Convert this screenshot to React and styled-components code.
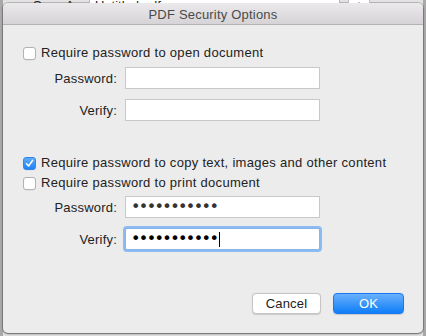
import React from 'react'
import styled, { createGlobalStyle } from 'styled-components'

const GlobalStyle = createGlobalStyle`
    html, body {
        margin: 0;
        padding: 0;
        background: #c4c4c4;
    }
    body {
        font-family: "Liberation Sans", Arial, sans-serif;
        -webkit-font-smoothing: antialiased;
    }
`

function Checkbox({ checked })
{
    return (
        <Box checked={checked}>
            {checked && (
                <svg width='9' height='9' viewBox='0 0 9 9'>
                    <path d='M1.5 4.8 L3.6 7 L7.6 1.4' fill='none' stroke='#fff' strokeWidth='1.6' strokeLinecap='round' strokeLinejoin='round' />
                </svg>
            )}
        </Box>
    )
}

function Field({ label, dots, focused, dark })
{
    return (
        <FieldRow>
            <FieldLabel>{label}</FieldLabel>
            <Input focused={focused}>
                {dots > 0 && <Dots dark={dark}>{'•'.repeat(dots)}</Dots>}
                {focused && <Caret />}
            </Input>
        </FieldRow>
    )
}

function App()
{
    return (
        <Page>
            <GlobalStyle />
            <Behind>
                <BehindText>Save As:</BehindText>
                <BehindField>Untitled.pdf</BehindField>
                <BehindButton>
                    <svg width='8' height='5' viewBox='0 0 8 5'>
                        <path d='M1 4 L4 1 L7 4' fill='none' stroke='#333' strokeWidth='1.2' />
                    </svg>
                </BehindButton>
            </Behind>
            <Window>
                <TitleBar>PDF Security Options</TitleBar>
                <Body>
                    <Group>
                        <CheckRow>
                            <Checkbox />
                            <CheckLabel>Require password to open document</CheckLabel>
                        </CheckRow>
                        <Fields top={4}>
                            <Field label='Password:' />
                            <Field label='Verify:' />
                        </Fields>
                    </Group>
                    <Group top={32}>
                        <CheckRow>
                            <Checkbox checked />
                            <CheckLabel>Require password to copy text, images and other content</CheckLabel>
                        </CheckRow>
                        <CheckRow>
                            <Checkbox />
                            <CheckLabel>Require password to print document</CheckLabel>
                        </CheckRow>
                        <Fields top={3}>
                            <Field label='Password:' dots={11} dark />
                            <Field label='Verify:' dots={11} focused />
                        </Fields>
                    </Group>
                    <Buttons>
                        <Button>Cancel</Button>
                        <Button primary>OK</Button>
                    </Buttons>
                </Body>
            </Window>
        </Page>
    )
}

export default App

const Page = styled.div`
    width: 426px;
    height: 336px;
    overflow: hidden;
    padding: 0 3px;
    box-sizing: border-box;
    background: linear-gradient(to right, #a9a9a9 0, #a9a9a9 3px, #e2e2e2 3px, #e2e2e2 423px, #a9a9a9 423px);
`

const Behind = styled.div`
    height: 3px;
    overflow: hidden;
    display: flex;
    align-items: flex-end;
    padding-left: 30px;
`

const BehindText = styled.div`
    font-size: 13px;
    line-height: 13px;
    color: #222;
    margin-bottom: -9px;
    width: 56px;
`

const BehindField = styled(BehindText)`
    background: #fff;
    border-left: 1px solid #b8b8b8;
    border-right: 1px solid #b8b8b8;
    padding-left: 5px;
    width: 244px;
`

const BehindButton = styled.div`
    width: 20px;
    height: 13px;
    margin: 0 0 -9px 8px;
    background: #fff;
    border: 1px solid #c0c0c0;
    border-radius: 3px;
    display: grid;
    place-items: center;
`

const Window = styled.div`
    width: 420px;
    height: 330px;
    background: #ececec;
    border-radius: 5px;
    overflow: hidden;
    box-shadow: 0 0 0 1px rgba(0, 0, 0, 0.18), 0 1px 2px rgba(0, 0, 0, 0.45);
    display: flex;
    flex-direction: column;
`

const TitleBar = styled.div`
    flex: none;
    height: 20px;
    padding-top: 1px;
    border-bottom: 1px solid #b3b3b3;
    background: linear-gradient(to bottom, #ebe9eb, #d5d3d5);
    color: #4a4a4a;
    font-size: 13px;
    letter-spacing: 0.2px;
    display: flex;
    align-items: center;
    justify-content: center;
`

const Body = styled.div`
    flex: 1;
    padding: 18px 19px 0 20px;
    display: flex;
    flex-direction: column;
`

const Group = styled.div`
    display: flex;
    flex-direction: column;
    margin-top: ${p => p.top || 0}px;
`

const CheckRow = styled.div`
    height: 20px;
    display: flex;
    align-items: center;
    gap: 5px;
`

const Box = styled.div`
    width: 13px;
    height: 13px;
    box-sizing: border-box;
    border-radius: 3px;
    display: grid;
    place-items: center;
    border: 1px solid ${p => p.checked ? '#2f86ee' : '#b2b2b2'};
    background: ${p => p.checked ? 'linear-gradient(to bottom, #5eacfb, #1f82f7)' : '#fff'};
    box-shadow: 0 0.5px 0.5px rgba(0, 0, 0, 0.08);
`

const CheckLabel = styled.span`
    font-size: 13px;
    letter-spacing: 0.3px;
    color: #222;
    margin-top: -2px;
`

const Fields = styled.div`
    display: flex;
    flex-direction: column;
    gap: 10px;
    margin-top: ${p => p.top}px;
`

const FieldRow = styled.div`
    display: flex;
    align-items: center;
    gap: 8px;
`

const FieldLabel = styled.div`
    width: 94px;
    text-align: right;
    font-size: 13px;
    letter-spacing: 0.2px;
    color: #222;
`

const Input = styled.div`
    width: 195px;
    height: 22px;
    box-sizing: border-box;
    background: #fff;
    border: 1px solid ${p => p.focused ? '#8ab4e8' : '#c9c9c9'};
    box-shadow: ${p => p.focused ? '0 0 0 2px #8cbbf3' : 'none'};
    border-radius: ${p => p.focused ? '2px' : '0'};
    display: flex;
    align-items: center;
    padding-left: 5px;
`

const Dots = styled.span`
    font-family: "DejaVu Sans", sans-serif;
    font-size: 16px;
    line-height: 16px;
    letter-spacing: -1.6px;
    color: ${p => p.dark ? '#333' : '#000'};
`

const Caret = styled.span`
    width: 1px;
    height: 15px;
    background: #000;
    margin-left: 2px;
`

const Buttons = styled.div`
    display: flex;
    justify-content: flex-end;
    gap: 12px;
    margin-top: 43px;
`

const Button = styled.button`
    height: 21px;
    width: ${p => p.primary ? '71px' : '69px'};
    padding: 0;
    border-radius: 4px;
    font-family: "Liberation Sans", Arial, sans-serif;
    font-size: 13px;
    letter-spacing: 0.2px;
    color: ${p => p.primary ? '#fff' : '#222'};
    border: 1px solid ${p => p.primary ? '#1a78f2' : '#c5c5c5'};
    background: ${p => p.primary ? 'linear-gradient(to bottom, #68b0fb, #0f7ef8)' : '#fff'};
    box-shadow: 0 0.5px 1px rgba(0, 0, 0, 0.15);
`
